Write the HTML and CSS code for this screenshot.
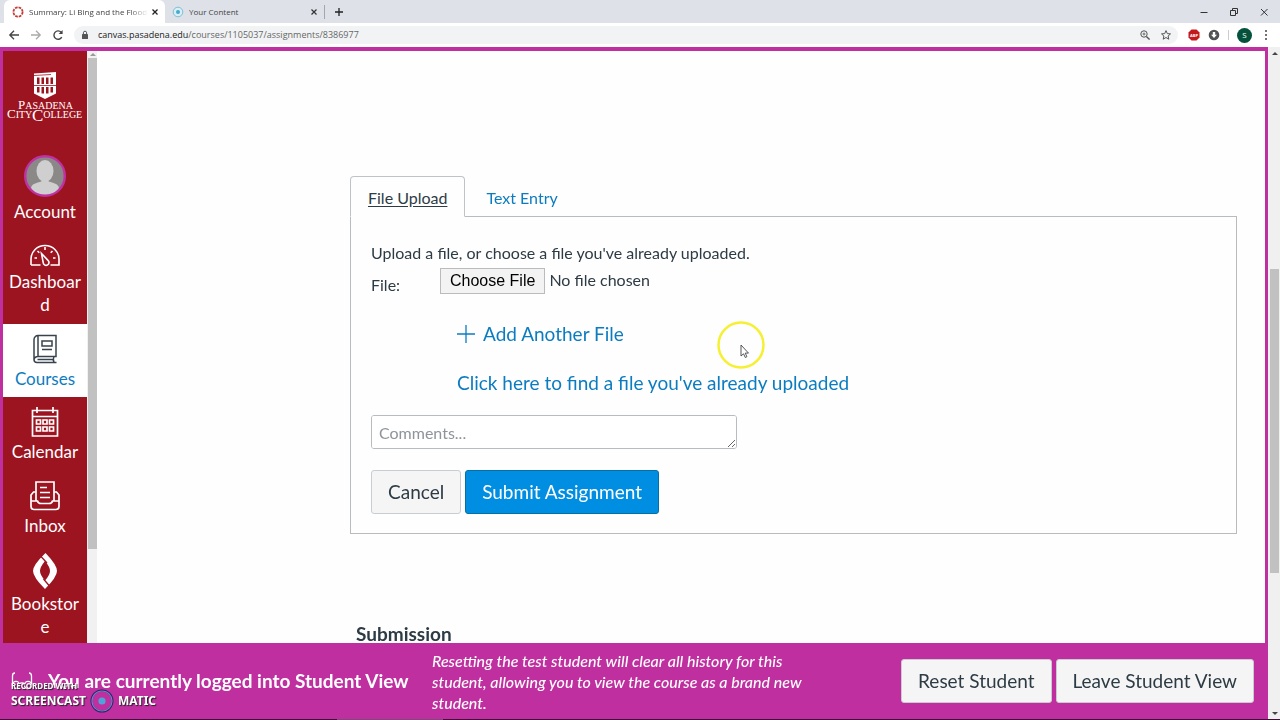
FILE: index.html
```html
<!DOCTYPE html>
<html lang="en">
<head>
<meta charset="utf-8">
<title>Summary: Li Bing and the Flooding</title>
<link rel="stylesheet" href="styles.css">
</head>
<body>
<header class="browser">
  <div class="tabstrip">
    <div class="tab tab-active">
      <svg class="favicon" viewBox="0 0 12 12"><circle cx="6" cy="6" r="4.6" fill="none" stroke="#c23a34" stroke-width="1.8" stroke-dasharray="2.7 0.91"/></svg>
      <span class="tab-title tab-title-fade">Summary: Li Bing and the Floodi</span>
      <button class="tab-close" aria-label="Close tab"><svg viewBox="0 0 8 8"><path d="M1.5 1.5l5 5M6.5 1.5l-5 5" stroke="#222" stroke-width="1.3"/></svg></button>
    </div>
    <div class="tab tab-second">
      <svg class="favicon" viewBox="0 0 12 12"><circle cx="6" cy="6" r="4.8" fill="#d9eef4" stroke="#7fc0d6" stroke-width="1"/><circle cx="6" cy="6" r="2" fill="#45a9cc"/></svg>
      <span class="tab-title">Your Content</span>
      <button class="tab-close" aria-label="Close tab"><svg viewBox="0 0 8 8"><path d="M1.5 1.5l5 5M6.5 1.5l-5 5" stroke="#333" stroke-width="1.2"/></svg></button>
    </div>
    <button class="new-tab" aria-label="New tab"><svg viewBox="0 0 10 10"><path d="M5 1v8M1 5h8" stroke="#222" stroke-width="1.3"/></svg></button>
    <div class="window-controls">
      <button aria-label="Minimize"><svg viewBox="0 0 10 10"><path d="M1.5 5.5h7" stroke="#333"/></svg></button>
      <button aria-label="Restore"><svg viewBox="0 0 10 10"><path d="M1.5 3.5h5v5h-5zM3.5 3V1.500h5v5H7" fill="none" stroke="#333"/></svg></button>
      <button aria-label="Close"><svg viewBox="0 0 10 10"><path d="M2 2l6.500 6.500M8.500 2L2 8.500" stroke="#333"/></svg></button>
    </div>
  </div>
  <div class="toolbar">
    <button aria-label="Back"><svg viewBox="0 0 12 12"><path d="M11 6H2M6 1.800L1.800 6 6 10.200" fill="none" stroke="#444" stroke-width="1.3"/></svg></button>
    <button aria-label="Forward"><svg viewBox="0 0 12 12"><path d="M1 6h9M6 1.800L10.200 6 6 10.200" fill="none" stroke="#aaa" stroke-width="1.3"/></svg></button>
    <button aria-label="Reload"><svg viewBox="0 0 12 12"><path d="M9.800 8.200A4.200 4.200 0 1 1 9.200 3.200" fill="none" stroke="#444" stroke-width="1.4"/><path d="M10.600 1v4h-4z" fill="#444"/></svg></button>
    <div class="address">
      <svg class="lock" viewBox="0 0 8 10"><rect x="1" y="4" width="6" height="5" rx=".6" fill="#555"/><path d="M2.400 4V2.800a1.600 1.600 0 0 1 3.200 0V4" fill="none" stroke="#555"/></svg>
      <span class="url"><b>canvas.pasadena.edu</b>/courses/1105037/assignments/8386977</span>
      <button aria-label="Zoom"><svg viewBox="0 0 12 12"><circle cx="5" cy="5" r="3.200" fill="none" stroke="#555"/><path d="M7.400 7.400l3.200 3.200" stroke="#555" stroke-width="1.4"/><path d="M3.500 5h3M5 3.500v3" stroke="#555" stroke-width=".8"/></svg></button>
      <button aria-label="Bookmark"><svg viewBox="0 0 12 12"><path d="M6 1.600l1.300 3 3.200.3-2.400 2.100.7 3.200L6 8.500l-2.800 1.700.7-3.200-2.400-2.100 3.200-.3z" fill="none" stroke="#555"/></svg></button>
    </div>
    <div class="extensions">
      <button aria-label="ABP"><svg viewBox="0 0 12 12"><path d="M3.500.5h5l3 3v5l-3 3h-5l-3-3v-5z" fill="#c4191c"/><text x="6" y="7.700" class="abp">ABP</text></svg></button>
      <button aria-label="Download"><svg viewBox="0 0 12 12"><circle cx="6" cy="6" r="5.300" fill="#505256"/><path d="M4.800 3h2.400v2.800H9L6 9 3 5.800h1.800z" fill="#fff"/></svg></button>
      <span class="divider"></span>
      <button class="profile">S</button>
      <button aria-label="Menu"><svg viewBox="0 0 12 12"><g fill="#444"><circle cx="6" cy="2" r="1"/><circle cx="6" cy="6" r="1"/><circle cx="6" cy="10" r="1"/></g></svg></button>
    </div>
  </div>
</header>

<div class="viewport">
  <div class="frame">
    <div class="app">
      <nav class="sidebar">
        <a class="logo" href="#" aria-label="Pasadena City College">
          <svg viewBox="0 0 84 56">
            <path d="M31 3.500L53 2v21.500L42 29l-11-5.500z" fill="#fff"/>
            <path d="M34 7.500h2.500V14H34zM38.500 7.500H41V14h-2.500zM43 7.500h2.500V14H43zM47.500 7.500H50V14h-2.500zM34 17h2.500v5.500H34zM38.500 17H41v6.500h-2.500zM43 17h2.500v6.500H43zM47.500 17H50v5.500h-2.500z" fill="#9d1421"/>
            <path d="M31 5.500l17-1M31 15.500h22" stroke="#9d1421" stroke-width=".8"/>
            <g class="logo-text">
              <text x="15" y="39"><tspan class="cap">P</tspan>ASADENA</text>
              <text x="4" y="48"><tspan class="cap">C</tspan>ITY</text>
              <text x="29" y="48"><tspan class="big" dy="3">C</tspan><tspan dy="-3">OLLEGE</tspan></text>
            </g>
          </svg>
        </a>
        <a class="nav-item account" href="#">
          <svg class="avatar" viewBox="0 0 42 42"><circle cx="21" cy="21" r="20" fill="#8b8888"/><path d="M7 33c1-5 7-5 11-7h6c4 2 10 2 11 7-3 5-8 7-14 7S10 38 7 33z" fill="#cfcfcf"/><ellipse cx="21" cy="16" rx="8.500" ry="11" fill="#cfcfcf"/><circle cx="21" cy="21" r="19.800" fill="none" stroke="#bf32a4" stroke-width="2.400"/></svg>
          <span>Account</span>
        </a>
        <a class="nav-item" href="#">
          <svg class="icon" viewBox="0 0 30 30"><g fill="none" stroke="#fff" stroke-width="1.6"><path d="M1 28v-6a14 13.500 0 0 1 28 0v6h-8.500M1 28h9.500M15 10v3M4.500 21H7M23 21h2.500M7.500 14l1.800 1.800M22.500 14l-1.800 1.800"/><path d="M11.500 16.500l6.500 6.800a2.900 2.900 0 1 1-4.800 2.200z"/></g></svg>
          <span>Dashboard</span>
        </a>
        <a class="nav-item current" href="#">
          <svg class="icon" viewBox="0 0 30 30"><g fill="none" stroke="#39434d" stroke-width="1.500"><path d="M8 1.500h18v21H8a4 4 0 0 0-4 3.500V5.500a4 4 0 0 1 4-4zM8 1.500v21M26 22.500h-2c-1 2-1 4 0 6h2.500M24 28.500H7a3 3 0 0 1-3-3M7.500 25.500H23"/><path d="M12 7h10v5H12zM12 15.500h10"/></g></svg>
          <span>Courses</span>
        </a>
        <a class="nav-item" href="#">
          <svg class="icon" viewBox="0 0 30 30"><g fill="none" stroke="#fff" stroke-width="1.700"><path d="M2.500 3.500h25v25.500h-25zM2.500 9.500h25M7 0v6M23 0v6"/><path d="M6.500 13h4v4h-4zM13 13h4v4h-4zM19.500 13h4v4h-4zM6.500 20h4v4h-4zM13 20h4v4h-4zM19.500 20h4v4h-4z"/></g></svg>
          <span>Calendar</span>
        </a>
        <a class="nav-item" href="#">
          <svg class="icon" viewBox="0 0 30 30"><g fill="none" stroke="#fff" stroke-width="1.700"><path d="M6 20V1h18v19M6 11H3.500L1 14v11.500c0 2 1 3 3 3h22c2 0 3-1 3-3V14l-2.500-3H24M1 20h6.500c.5 2 1.500 2.500 3.500 2.500h8c2 0 3-.5 3.500-2.500H29M10 6.500h7M10 11.500h10M10 16.500h10"/></g></svg>
          <span>Inbox</span>
        </a>
        <a class="nav-item bookstore" href="#">
          <svg class="icon" viewBox="0 0 30 36"><path fill="#fff" fill-rule="evenodd" d="M15.500 0Q27 12 27 18T15 36Q3 24 3 18T15.500 0zM15 8Q10 14 10 18T15 27.500Q20 22 20 18T15 8z"/><path d="M10.500 3l6.500 7M19.500 33l-6-7" stroke="#9d1421" stroke-width="1.300"/></svg>
          <span>Bookstore</span>
        </a>
      </nav>
      <div class="inner-scroll"><i class="arrow-up"></i><div class="inner-thumb"></div></div>
      <main class="content">
        <div class="tabs" role="tablist">
          <a class="form-tab selected" href="#" role="tab">File Upload</a>
          <a class="form-tab" href="#" role="tab">Text Entry</a>
        </div>
        <form class="panel">
          <p class="hint">Upload a file, or choose a file you've already uploaded.</p>
          <div class="file-row">
            <label for="upload">File:</label>
            <input id="upload" class="file-input" type="file">
          </div>
          <div class="links">
            <a href="#"><svg class="plus" viewBox="0 0 18 18"><path d="M9 0v18M0 9h18" stroke="#0c7cc0" stroke-width="1.300"/></svg>Add Another File</a>
            <a href="#">Click here to find a file you've already uploaded</a>
          </div>
          <textarea class="comments" placeholder="Comments..." aria-label="Comments" rows="1"></textarea>
          <div class="actions">
            <button type="button" class="btn">Cancel</button>
            <button type="button" class="btn btn-primary">Submit Assignment</button>
          </div>
        </form>
        <h2 class="submission">Submission</h2>
      </main>
    </div>
    <div class="student-bar">
      <div class="status">
        <svg class="glasses" viewBox="0 0 22 18"><g fill="none" stroke="#fff" stroke-width="1.300"><path d="M4 1C2 1 1.500 2 1.500 4v9M18 1c2 0 2.500 1 2.500 3v9M8.500 12c1-1.500 4-1.500 5 0"/><circle cx="5" cy="13" r="3.600"/><circle cx="17" cy="13" r="3.600"/></g></svg>
        <strong>You are currently logged into Student View</strong>
      </div>
      <p class="notice">Resetting the test student will clear all history for this student, allowing you to view the course as a brand new student.</p>
      <div class="bar-actions">
        <button class="btn">Reset Student</button>
        <button class="btn">Leave Student View</button>
      </div>
    </div>
  </div>
  <div class="outer-scroll"><i class="arrow-up dark"></i><div class="outer-thumb"></div><i class="arrow-down"></i></div>
</div>
<div class="progress"></div>

<div class="watermark">
  <span class="recorded">RECORDED WITH</span>
  <span class="brand">SCREENCAST<svg viewBox="0 0 24 24"><circle cx="12" cy="12" r="10.500" fill="none" stroke="#2d2460" stroke-width="2"/><circle cx="12" cy="12" r="10" fill="none" stroke="#6f7fd0" stroke-width="1.200"/><circle cx="12" cy="12" r="3.600" fill="#4fa3d8"/></svg>MATIC</span>
</div>
<svg class="pointer" viewBox="0 0 48 48"><circle cx="24" cy="24" r="22.500" fill="none" stroke="#f5f032" stroke-width="2.500"/><path d="M24 24v11l2.500-2.200 1.800 3.700 1.600-.8-1.700-3.600h3.300z" fill="#fff" stroke="#444" stroke-width=".9"/></svg>
</body>
</html>
```
FILE: styles.css
```css
* { box-sizing: border-box; }
body { margin: 0; height: 100vh; display: flex; flex-direction: column; overflow: hidden; position: relative; background: #fefefe; color: #2d3b45; font-family: Lato, sans-serif; font-size: 16px; line-height: 23px; }
button { font: inherit; color: inherit; padding: 0; border: 0; background: none; }
a { color: #0c7cc0; text-decoration: none; }
svg { display: block; flex: none; }

.browser { font-family: "Open Sans", sans-serif; font-size: 8px; line-height: 12px; color: #444; }
.tabstrip { display: flex; align-items: center; height: 23px; background: #dee1e8; padding-left: 4px; }
.tab { display: flex; align-items: center; height: 23px; padding-left: 8px; }
.tab-active { width: 161px; background: #fff; border-radius: 6px 6px 0 0; }
.tab-second { width: 160px; border-right: 1px solid #a3a6ac; height: 14px; padding-left: 7px; }
.favicon { width: 12px; height: 12px; margin-right: 5px; }
.tab-title { flex: 1; overflow: hidden; white-space: nowrap; }
.tab-title-fade { -webkit-mask-image: linear-gradient(90deg, #000 85%, transparent); mask-image: linear-gradient(90deg, #000 85%, transparent); }
.tab-close { width: 8px; margin: 0 6px 0 3px; }
.new-tab { width: 10px; margin-left: 9px; }
.window-controls { margin-left: auto; display: flex; gap: 20px; padding-right: 11px; }
.window-controls button { width: 10px; }
.window-controls svg { height: 10px; }
.toolbar { display: flex; align-items: center; height: 24px; background: #fff; padding-left: 8px; gap: 10px; }
.toolbar > button { width: 12px; }
.address { flex: 1; display: flex; align-items: center; gap: 9px; height: 18px; border-radius: 9px; background: #f1f3f4; padding: 0 6px 0 7px; }
.address button { width: 12px; }
.lock { width: 8px; height: 10px; }
.url { flex: 1; font-size: 9px; color: #666; }
.url b { font-weight: 400; color: #222; }
.extensions { display: flex; align-items: center; gap: 8px; padding-right: 8px; }
.extensions button { width: 12px; }
.abp { font: 700 4px "Open Sans", sans-serif; fill: #fff; text-anchor: middle; }
.divider { width: 1px; height: 10px; background: #ccc; }
.extensions .profile { width: 15px; height: 15px; border-radius: 50%; background: #04513c; color: #fff; font-size: 8px; }

.viewport { flex: 1; min-height: 0; display: flex; }
.frame { flex: 1; min-width: 0; display: flex; flex-direction: column; border: solid #bf2fa0; border-width: 4px 3px 0; }
.app { flex: 1; min-height: 0; display: flex; overflow: hidden; }
.sidebar { flex: none; width: 84px; background: #9d1421; overflow: hidden; font-size: 17px; }
.logo { display: block; margin: 19px 0 29px; }
.logo svg { width: 84px; height: 56px; }
.logo-text { font: 10px "Liberation Serif", serif; fill: #fff; }
.cap { font-size: 13px; }
.big { font-size: 17px; }
.nav-item { display: flex; flex-direction: column; align-items: center; gap: 3px; padding: 10px 6px 8px; color: #fff; text-align: center; word-break: break-all; }
.icon { width: 30px; height: 30px; }
.account { padding: 0 0 4px; }
.avatar { width: 42px; height: 42px; }
.current { background: #fff; color: #0c7cc0; padding-bottom: 7px; }
.bookstore { padding-top: 8px; }
.bookstore .icon { height: 36px; }
.inner-scroll { flex: none; width: 10px; padding: 2px 0 0 1px; background: #f1f1f1; }
.inner-thumb { height: 491px; margin-top: 2px; background: #c1c1c1; }
.arrow-up, .arrow-down { display: block; width: 6px; margin: 0 auto; border: solid transparent; border-width: 0 3px 3px; border-bottom-color: #999; }
.content { flex: 1; min-width: 0; padding: 125px 28px 0 253px; }

.tabs { display: flex; }
.form-tab { height: 41px; padding: 9px 17px; border: 1px solid transparent; border-radius: 4px 4px 0 0; margin-right: 3px; }
.form-tab.selected { position: relative; color: #2d3b45; text-decoration: underline; text-underline-offset: 2px; border-color: #c0c3c6; border-bottom-color: #fefefe; background: #fefefe; }
.panel { margin-top: -1px; border: 1px solid #b9bcbf; padding: 24px 20px 19px; }
.hint { margin: 0 0 3px; }
.file-row { display: flex; }
.file-row label { width: 69px; padding-top: 6px; }
.file-input { font: 16px/26px Lato, sans-serif; color: inherit; flex: 1; height: 29px; }
.file-input::file-selector-button { font: 16px "Liberation Sans", sans-serif; height: 26px; padding: 0 9px; margin-right: 4px; color: #000; background: #f3f3f3; border: 1px solid #bbb; border-radius: 0; }
.links { display: flex; flex-direction: column; align-items: flex-start; gap: 25px; margin: 26px 0 20px 86px; font-size: 19px; line-height: 24px; }
.links a { display: flex; align-items: center; }
.plus { width: 18px; height: 18px; margin-right: 8px; }
.comments { display: block; width: 366px; height: 34px; padding: 5px 7px; border: 1px solid #b9bcbf; border-radius: 3px; background: #fff; font: 16px/23px Lato, sans-serif; color: inherit; }
.comments::placeholder { color: #8e9499; }
.actions { display: flex; gap: 4px; margin-top: 21px; }
.btn { height: 44px; padding: 0 16px; border: 1px solid #c7cdd1; border-radius: 3px; background: #f5f5f5; color: #2d3b45; font-size: 19px; line-height: 24px; white-space: nowrap; }
.btn-primary { background: #008ee2; border-color: #0770a3; color: #fff; }
.submission { margin: 88px 6px 0; font-size: 19px; line-height: 24px; font-weight: 700; }

.student-bar { flex: none; display: flex; align-items: center; min-height: 76px; padding: 0 11px 0 8px; background: #bf2fa0; color: #fff; }
.status { display: flex; align-items: center; gap: 15px; width: 421px; font-size: 19px; line-height: 24px; white-space: nowrap; }
.glasses { width: 22px; height: 18px; }
.notice { width: 385px; margin: 0; font-style: italic; font-weight: 500; line-height: 21px; }
.bar-actions { display: flex; gap: 4px; margin-left: auto; }

.outer-scroll { flex: none; width: 12px; display: flex; flex-direction: column; padding: 5px 1px 4px 2px; background: #f1f0f1; }
.outer-thumb { height: 304px; margin: 214px 0 auto; background: #c1c1c1; }
.dark { border-bottom-color: #444; }
.arrow-down { border-width: 3px 3px 0; border-top-color: #444; }
.progress { height: 1px; background: linear-gradient(90deg, #3c0d35 0 337px, #7a4c75 337px 443px, #3c0d35 443px); }

.watermark { position: absolute; left: 11px; bottom: 7px; display: flex; flex-direction: column; font: 700 12px/24px "Noto Sans", sans-serif; color: #fff; text-shadow: 1px 1px 1px #222; }
.recorded { font-size: 8px; line-height: 8px; margin-bottom: -1px; }
.brand { display: flex; align-items: center; gap: 4px; }
.brand svg { width: 24px; height: 24px; }
.pointer { position: absolute; left: 717px; top: 321px; width: 48px; height: 48px; }
```
